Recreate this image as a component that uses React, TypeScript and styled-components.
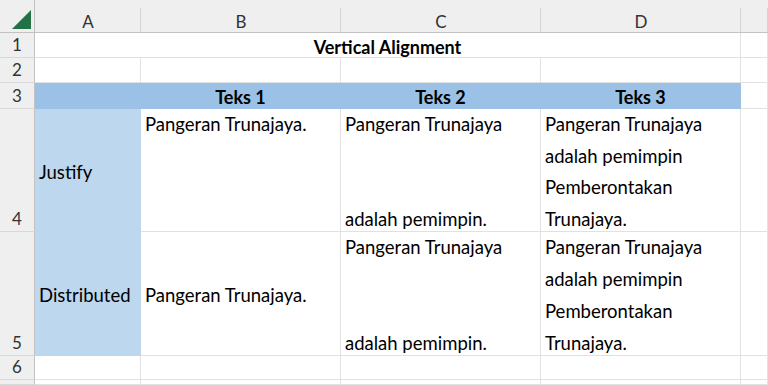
import React from 'react';
import styled, { createGlobalStyle } from 'styled-components';

const GlobalStyle = createGlobalStyle`
  html, body {
    margin: 0;
    padding: 0;
    background: #ffffff;
    overflow: hidden;
  }
  body {
    font-family: Lato, "Liberation Sans", sans-serif;
    color: #000000;
  }
`;

const GRID = '#e1e1e1';
const HEAD_BG = '#efefef';
const HEAD_EDGE = '#c2c2c2';
const BLUE_DARK = '#9bc2e6';
const BLUE_LIGHT = '#bdd7ee';

const Sheet = styled.div`
  display: grid;
  grid-template-columns: 35px 106px 200px 200px 200px 1fr;
  grid-template-rows: 33px 25px 25px 26px 123px 124px 24px 1fr;
  width: 768px;
  height: 385px;
  overflow: hidden;
  background: #ffffff;
`;

const Corner = styled.div`
  background: ${HEAD_BG};
  border-right: 1px solid ${HEAD_EDGE};
  border-bottom: 1px solid ${HEAD_EDGE};
  display: flex;
  align-items: flex-end;
  justify-content: flex-end;
  padding: 0 2px 2px 0;

  svg {
    display: block;
  }
`;

const ColHead = styled.div`
  position: relative;
  background: ${HEAD_BG};
  border-bottom: 1px solid ${HEAD_EDGE};
  display: flex;
  align-items: center;
  justify-content: center;
  padding-top: 10px;
  font-size: 17px;
  color: #333333;

  &::after {
    content: '';
    position: absolute;
    top: 8px;
    right: 0;
    bottom: 0;
    width: 1px;
    background: #d4d4d4;
  }
`;

const RowHead = styled.div`
  background: ${HEAD_BG};
  border-right: 1px solid ${HEAD_EDGE};
  border-bottom: 1px solid #d8d8d8;
  display: flex;
  align-items: flex-end;
  justify-content: center;
  font-size: 17px;
  line-height: 24px;
  color: #333333;
`;

type CellProps = {
  $fill?: string;
  $span?: number;
  $valign?: 'flex-start' | 'center' | 'flex-end' | 'space-between';
  $center?: boolean;
  $bold?: boolean;
};

const Cell = styled.div<CellProps>`
  grid-column: ${({ $span }) => ($span ? `span ${$span}` : 'auto')};
  background: ${({ $fill }) => $fill || '#ffffff'};
  border-right: 1px solid ${({ $fill }) => $fill || GRID};
  border-bottom: 1px solid ${({ $fill }) => $fill || GRID};
  padding: 3px 4px 0;
  display: flex;
  flex-direction: column;
  justify-content: ${({ $valign }) => $valign || 'flex-end'};
  text-align: ${({ $center }) => ($center ? 'center' : 'left')};
  font-size: ${({ $bold }) => ($bold ? '18px' : '18.5px')};
  line-height: 24px;
  font-weight: ${({ $bold }) => ($bold ? 700 : 400)};
  white-space: nowrap;
  overflow: hidden;
  min-width: 0;
`;

const Line = styled.span`
  display: block;
`;

const CornerMark = () => (
  <svg width="20" height="20" viewBox="0 0 20 20">
    <polygon points="19,0 19,19 0,19" fill="#217346" />
  </svg>
);

const columns = ['A', 'B', 'C', 'D', ''];

const twoLines = ['Pangeran Trunajaya', 'adalah pemimpin.'];
const fourLines = ['Pangeran Trunajaya', 'adalah pemimpin', 'Pemberontakan', 'Trunajaya.'];

const App: React.FC = () => {
  return (
    <>
      <GlobalStyle />
      <Sheet>
        <Corner>
          <CornerMark />
        </Corner>
        {columns.map((c, i) => (
          <ColHead key={i}>{c}</ColHead>
        ))}

        <RowHead>1</RowHead>
        <Cell $span={4} $center $bold $valign="center">
          Vertical Alignment
        </Cell>
        <Cell />

        <RowHead>2</RowHead>
        <Cell />
        <Cell />
        <Cell />
        <Cell />
        <Cell />

        <RowHead>3</RowHead>
        <Cell $fill={BLUE_DARK} />
        <Cell $fill={BLUE_DARK} $center $bold $valign="center">Teks 1</Cell>
        <Cell $fill={BLUE_DARK} $center $bold $valign="center">Teks 2</Cell>
        <Cell $fill={BLUE_DARK} $center $bold $valign="center">Teks 3</Cell>
        <Cell />

        <RowHead>4</RowHead>
        <Cell $fill={BLUE_LIGHT} $valign="center">Justify</Cell>
        <Cell $valign="flex-start">
          <Line>Pangeran Trunajaya.</Line>
        </Cell>
        <Cell $valign="space-between">
          {twoLines.map((l) => (
            <Line key={l}>{l}</Line>
          ))}
        </Cell>
        <Cell $valign="space-between">
          {fourLines.map((l) => (
            <Line key={l}>{l}</Line>
          ))}
        </Cell>
        <Cell />

        <RowHead>5</RowHead>
        <Cell $fill={BLUE_LIGHT} $valign="center">Distributed</Cell>
        <Cell $valign="center">
          <Line>Pangeran Trunajaya.</Line>
        </Cell>
        <Cell $valign="space-between">
          {twoLines.map((l) => (
            <Line key={l}>{l}</Line>
          ))}
        </Cell>
        <Cell $valign="space-between">
          {fourLines.map((l) => (
            <Line key={l}>{l}</Line>
          ))}
        </Cell>
        <Cell />

        <RowHead>6</RowHead>
        <Cell />
        <Cell />
        <Cell />
        <Cell />
        <Cell />

        <RowHead />
        <Cell />
        <Cell />
        <Cell />
        <Cell />
        <Cell />
      </Sheet>
    </>
  );
};

export default App;
